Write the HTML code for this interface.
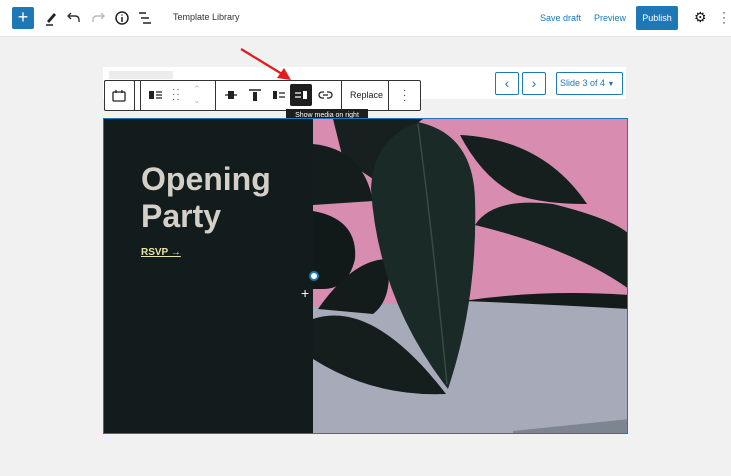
<!DOCTYPE html>
<html><head><style>
*{margin:0;padding:0;box-sizing:border-box}
body{width:731px;height:476px;background:#f1f1f1;font-family:"Liberation Sans",sans-serif;position:relative;overflow:hidden}
.top{position:absolute;left:0;top:0;width:731px;height:37px;background:#fff;border-bottom:1px solid #e4e4e4}
.abs{position:absolute}
.btn{position:absolute;font-size:9px;color:#1e78b5}
</style></head><body>
<div class="top">
 <div class="abs" style="left:12px;top:7px;width:22px;height:22px;background:#1e78b5;border-radius:2px;color:#fff;font-size:18px;line-height:21px;text-align:center">+</div>
 <svg class="abs" style="left:44px;top:10px" width="14" height="16"><path d="M3 11 L10 3 L12 5 L5 13Z" fill="#222"/><path d="M2 15H9" stroke="#222" stroke-width="1.5"/></svg>
 <svg class="abs" style="left:67px;top:11px" width="14" height="12"><path d="M4 2 L1 5 L4 8 M1 5 H8 Q12 5 12 9 V11" stroke="#333" stroke-width="1.4" fill="none"/></svg>
 <svg class="abs" style="left:91px;top:11px" width="14" height="12"><path d="M10 2 L13 5 L10 8 M13 5 H6 Q2 5 2 9 V11" stroke="#bbb" stroke-width="1.4" fill="none"/></svg>
 <svg class="abs" style="left:114px;top:10px" width="16" height="16"><circle cx="8" cy="8" r="6" stroke="#222" stroke-width="1.5" fill="none"/><path d="M8 7V12M8 4.5V5.5" stroke="#222" stroke-width="1.5"/></svg>
 <svg class="abs" style="left:138px;top:11px" width="14" height="14"><path d="M1 2H8M3 7H11M5 12H13" stroke="#222" stroke-width="1.5"/></svg>
 <div class="abs" style="left:173px;top:12px;font-size:9px;color:#333">Template Library</div>
 <div class="btn" style="left:540px;top:13px">Save draft</div>
 <div class="btn" style="left:594px;top:13px">Preview</div>
 <div class="abs" style="left:636px;top:6px;width:42px;height:24px;background:#1e78b5;color:#fff;font-size:9px;line-height:24px;text-align:center;border-radius:2px">Publish</div>
 <div class="abs" style="left:694px;top:9px;font-size:14px;color:#111">⚙</div>
 <div class="abs" style="left:722px;top:10px;font-size:12px;color:#222;line-height:5px">·<br>·<br>·</div>
</div>
<div class="abs" style="left:103px;top:67px;width:523px;height:32px;background:#fff"></div>
<div class="abs" style="left:109px;top:71px;width:64px;height:8px;background:#ececec"></div>
<div class="abs" style="left:495px;top:72px;width:24px;height:23px;border:1px solid #1e78b5;border-radius:2px;color:#1e78b5;text-align:center;font-size:14px;line-height:20px">‹</div>
<div class="abs" style="left:522px;top:72px;width:24px;height:23px;border:1px solid #1e78b5;border-radius:2px;color:#1e78b5;text-align:center;font-size:14px;line-height:20px">›</div>
<div class="abs" style="left:556px;top:72px;width:67px;height:23px;border:1px solid #1e78b5;border-radius:2px;color:#1e78b5;font-size:9px;line-height:21px;padding-left:3px">Slide 3 of 4 <span style="font-size:7px">▼</span></div>
<div class="abs" style="left:104px;top:80px;width:317px;height:31px;background:#fff;border:1px solid #333;border-radius:2px"></div>
<div class="abs" style="left:104px;top:80px;width:31px;height:31px;border:1px solid #333;border-radius:2px;background:#fff"></div>
<svg class="abs" style="left:112px;top:89px" width="14" height="13"><rect x="1" y="3" width="12" height="9" rx="1" stroke="#222" stroke-width="1.3" fill="none"/><path d="M4 1V4M10 1V4" stroke="#222" stroke-width="1.3"/></svg>
<div class="abs" style="left:140px;top:80px;width:1px;height:31px;background:#333"></div>
<div class="abs" style="left:215px;top:80px;width:1px;height:31px;background:#333"></div>
<div class="abs" style="left:341px;top:80px;width:1px;height:31px;background:#333"></div>
<div class="abs" style="left:388px;top:80px;width:1px;height:31px;background:#333"></div>
<svg class="abs" style="left:148px;top:89px" width="16" height="12"><rect x="1" y="2" width="5" height="8" fill="#222"/><path d="M8 3H14M8 6H14M8 9H14" stroke="#222" stroke-width="1.2"/></svg>
<div class="abs" style="left:172px;top:87px;font-size:10px;color:#444;line-height:5px;letter-spacing:1px">··<br>··<br>··</div>
<div class="abs" style="left:193px;top:84px;font-size:9px;color:#bbb;line-height:11px">⌃<br>⌄</div>
<svg class="abs" style="left:224px;top:88px" width="14" height="14"><path d="M1 7H13" stroke="#222" stroke-width="1.3"/><rect x="4" y="3" width="6" height="8" fill="#222"/></svg>
<svg class="abs" style="left:248px;top:88px" width="14" height="14"><path d="M1 2H13" stroke="#222" stroke-width="1.5"/><rect x="5" y="4" width="4" height="9" fill="#222"/></svg>
<svg class="abs" style="left:272px;top:89px" width="14" height="12"><rect x="1" y="2" width="4" height="8" fill="#222"/><path d="M7 4H13M7 8H13" stroke="#222" stroke-width="1.2"/></svg>
<div class="abs" style="left:290px;top:84px;width:22px;height:22px;background:#1e1e1e;border-radius:2px"></div>
<svg class="abs" style="left:294px;top:89px" width="14" height="12"><path d="M1 4H7M1 8H7" stroke="#fff" stroke-width="1.2"/><rect x="9" y="2" width="4" height="8" fill="#fff"/></svg>
<svg class="abs" style="left:318px;top:89px" width="15" height="12"><path d="M6 3H4A3 3 0 0 0 4 9H6M9 3H11A3 3 0 0 1 11 9H9M5 6H10" stroke="#222" stroke-width="1.3" fill="none"/></svg>
<div class="abs" style="left:350px;top:90px;font-size:9px;color:#222">Replace</div>
<div class="abs" style="left:403px;top:88px;font-size:10px;color:#222;line-height:5px">·<br>·<br>·</div>
<div class="abs" style="left:286px;top:109px;width:82px;height:13px;background:#1e1e1e;color:#fff;font-size:7px;line-height:13px;text-align:center">Show media on right</div>
<svg class="abs" style="left:236px;top:44px;z-index:5" width="64" height="42"><path d="M5 5 L46 30" stroke="#e31b1b" stroke-width="2.2"/><path d="M55 36 L41 34 L48 24Z" fill="#e31b1b"/></svg>
<div class="abs" style="left:103px;top:118px;width:525px;height:316px;border:1px solid #1e78b5;overflow:hidden;background:#131c1c">
 <svg class="abs" style="left:209px;top:0" width="316" height="316">
  <rect width="316" height="316" fill="#d88db0"/>
  <path d="M0 188 L316 176 L316 316 L0 316Z" fill="#a7abb9"/>
  <path d="M200 312 L316 300 L316 316 L200 316Z" fill="#7d8591"/>
  <path d="M20 0 H110 Q80 20 60 60 L30 40Z" fill="#17201f"/>
  <path d="M0 25 Q50 30 60 82 L0 86Z" fill="#141d1c"/>
  <path d="M0 92 Q45 100 42 140 Q35 170 10 170 L0 170Z" fill="#111a19"/>
  <path d="M5 190 Q40 140 75 140 Q80 180 60 195Z" fill="#131c1b"/>
  <path d="M0 200 Q60 180 133 275 Q60 278 0 240Z" fill="#141e1c"/>
  <path d="M105 3 Q60 20 58 70 Q65 180 135 270 Q165 180 162 80 Q160 15 105 3Z" fill="#1a2a27"/>
  <path d="M105 5 Q120 120 134 265" stroke="#3b4a3f" stroke-width="1.5" fill="none"/>
  <path d="M147 16 Q230 20 274 85 Q230 85 204 76 Q170 60 147 16Z" fill="#151f1d"/>
  <path d="M162 106 Q180 78 240 85 Q300 100 316 115 L316 170 Q260 130 162 106Z" fill="#162220"/>
  <path d="M150 182 Q230 170 316 176 L316 190 Q230 185 150 182Z" fill="#131c1b"/>
 </svg>
 <div class="abs" style="left:37px;top:42px;font-size:32px;font-weight:bold;color:#d4d0c8;line-height:37px">Opening<br>Party</div>
 <div class="abs" style="left:37px;top:128px;font-size:10px;font-weight:bold;color:#e8e2a8;text-decoration:underline">RSVP →</div>
 <div class="abs" style="left:205px;top:152px;width:10px;height:10px;border-radius:50%;background:#fff;border:2px solid #1e78b5"></div>
 <div class="abs" style="left:197px;top:166px;color:#fff;font-size:14px">+</div>
</div>
</body></html>
